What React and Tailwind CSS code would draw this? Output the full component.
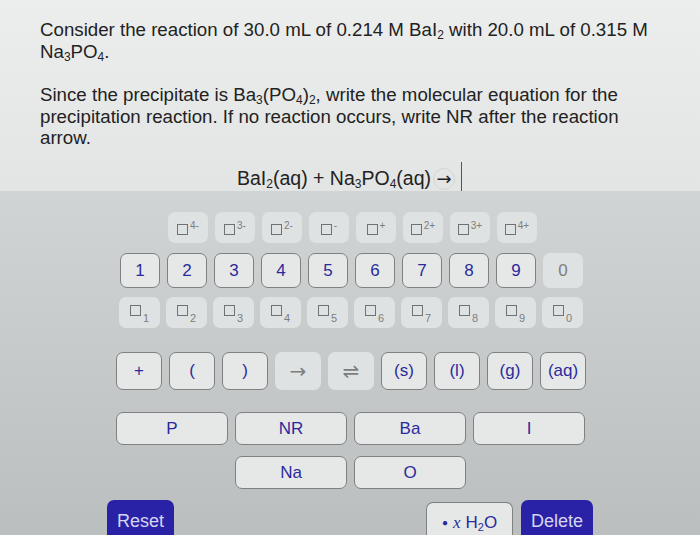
import React from "react"

const font = { fontFamily: '"Liberation Sans", Arial, sans-serif' }
const arrowFont = { fontFamily: '"DejaVu Sans", sans-serif' }

function Box({ sub, sup }) {
  return (
    <span className="inline-flex items-start">
      <span className="inline-block border border-[#6f7272] w-[11px] h-[11px] mt-[4px]" />
      {sup && <span className="text-[10px] leading-none ml-[2px] mt-[1px]">{sup}</span>}
      {sub && <span className="text-[11px] leading-none ml-[2px] mt-[12px]">{sub}</span>}
    </span>
  )
}

function Key({ children, active, className = "" }) {
  return (
    <div
      className={`flex items-center justify-center rounded-[7px] ${
        active
          ? "border border-[#7d8181] bg-[#e6e8e8] text-[#2a2a9c]"
          : "bg-[#dfe2e2] text-[#7b7e7e]"
      } ${className}`}
    >
      {children}
    </div>
  )
}

const S = ({ children }) => <sub className="text-[12px]">{children}</sub>

export default function App() {
  const charges = ["4-", "3-", "2-", "-", "+", "2+", "3+", "4+"]
  const nums = ["1", "2", "3", "4", "5", "6", "7", "8", "9"]
  const subs = ["1", "2", "3", "4", "5", "6", "7", "8", "9", "0"]
  const syms = [
    ["+", true],
    ["(", true],
    [")", true],
    ["→", false],
    ["⇌", false],
    ["(s)", true],
    ["(l)", true],
    ["(g)", true],
    ["(aq)", true],
  ]

  return (
    <div className="w-[700px] h-[535px] overflow-hidden bg-[#cdd1d1] flex flex-col" style={font}>
      <div className="h-[191px] bg-gradient-to-b from-[#eceeed] to-[#e3e5e4] pl-[40px] pt-[19px] text-[18.7px] leading-[21.5px] text-[#222]">
        <p>
          Consider the reaction of 30.0 mL of 0.214 M BaI<S>2</S> with 20.0 mL of 0.315 M
          <br />
          Na<S>3</S>PO<S>4</S>.
        </p>
        <p className="mt-[22px]">
          Since the precipitate is Ba<S>3</S>(PO<S>4</S>)<S>2</S>, write the molecular equation for the
          <br />
          precipitation reaction. If no reaction occurs, write NR after the reaction
          <br />
          arrow.
        </p>
        <div className="flex items-center mt-[13px] pl-[197px] text-[19.5px]">
          <span>
            BaI<S>2</S>(aq) + Na<S>3</S>PO<S>4</S>(aq)
          </span>
          <span
            className="ml-[2px] w-[22px] h-[22px] rounded-full border border-[#d4d6d6] flex items-center justify-center text-[18px] leading-none"
            style={arrowFont}
          >
            →
          </span>
          <span className="ml-[6px] w-[1px] h-[35px] bg-[#555]" />
        </div>
      </div>

      <div className="flex-1 bg-gradient-to-b from-[#d0d4d4] to-[#babebe]">
        <div className="flex gap-[7px] pl-[168px] pt-[21px]">
          {charges.map((c) => (
            <Key key={c} className="w-[40px] h-[31px] text-[#6f7272]">
              <Box sup={c} />
            </Key>
          ))}
        </div>
        <div className="flex gap-[7px] pl-[120px] pt-[10px]">
          {nums.map((n) => (
            <Key key={n} active className="w-[40px] h-[35px] text-[17px]">
              {n}
            </Key>
          ))}
          <Key className="w-[40px] h-[35px] text-[17px]">0</Key>
        </div>
        <div className="flex gap-[6px] pl-[119px] pt-[9px]">
          {subs.map((s) => (
            <Key key={s} className="w-[41px] h-[31px] text-[#6f7272]">
              <Box sub={s} />
            </Key>
          ))}
        </div>
        <div className="flex gap-[7px] pl-[116px] pt-[24px]">
          {syms.map(([s, a]) => (
            <Key key={s} active={a} className="w-[46px] h-[38px] text-[17px]">
              {a ? s : <span className="text-[20px] leading-none" style={arrowFont}>{s}</span>}
            </Key>
          ))}
        </div>
        <div className="flex gap-[7px] pl-[116px] pt-[22px]">
          {["P", "NR", "Ba", "I"].map((e) => (
            <Key key={e} active className="w-[112px] h-[33px] text-[17px]">
              {e}
            </Key>
          ))}
        </div>
        <div className="flex gap-[7px] pl-[235px] pt-[11px]">
          {["Na", "O"].map((e) => (
            <Key key={e} active className="w-[112px] h-[33px] text-[17px]">
              {e}
            </Key>
          ))}
        </div>
        <div className="flex items-end pl-[107px] pt-[11px]">
          <div className="w-[67px] h-[40px] rounded-t-[7px] bg-[#2a22a6] text-[#d6d6f2] text-[18px] flex items-start justify-center pt-[8px]">
            Reset
          </div>
          <div className="ml-[252px] w-[87px] h-[38px] rounded-t-[7px] border border-b-0 border-[#7d8181] bg-[#e6e8e8] text-[#2a2a9c] text-[17px] pt-[7px] text-center">
            <span className="mr-[5px] text-[10px] align-[2px]">●</span>
            <span className="italic mr-[5px]" style={{ fontFamily: '"Liberation Serif", serif' }}>x</span>
            H<sub className="text-[11px]">2</sub>O
          </div>
          <div className="ml-[8px] w-[72px] h-[40px] rounded-t-[7px] bg-[#2a22a6] text-[#d6d6f2] text-[18px] flex items-start justify-center pt-[8px]">
            Delete
          </div>
        </div>
      </div>
    </div>
  )
}
